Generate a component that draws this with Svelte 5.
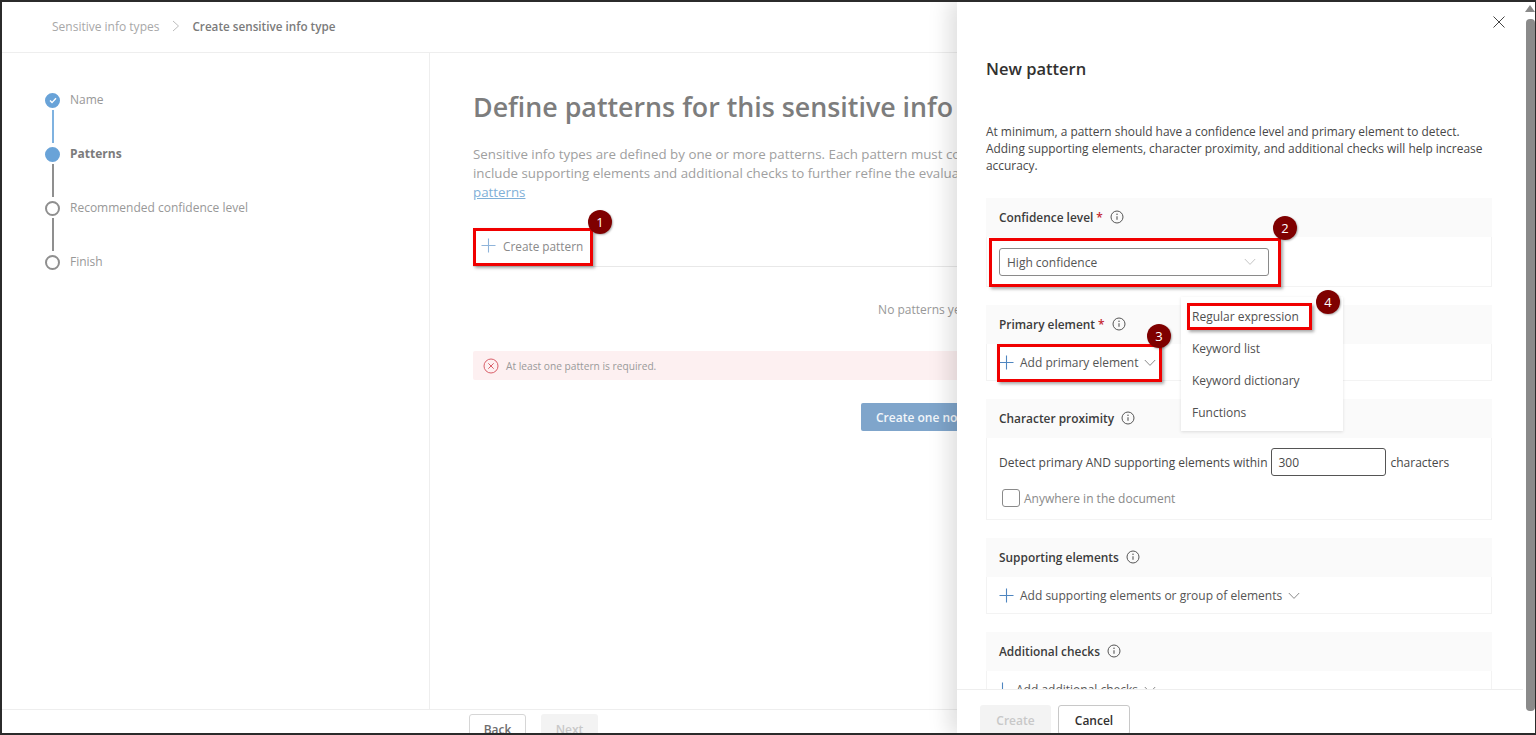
<script>
  const steps = [
    { label: 'Name', state: 'done' },
    { label: 'Patterns', state: 'current' },
    { label: 'Recommended confidence level', state: 'todo' },
    { label: 'Finish', state: 'todo' }
  ];
  const menu = ['Regular expression', 'Keyword list', 'Keyword dictionary', 'Functions'];
</script>

{#snippet plus(color = '#4f86c0')}
  <svg class="plus" width="15" height="15" viewBox="0 0 15 15"><path d="M7.5 .5v14M.5 7.5h14" stroke={color} stroke-width="1.1" fill="none"/></svg>
{/snippet}
{#snippet chev(color = '#8a8a8a')}
  <svg class="chev" width="12" height="8" viewBox="0 0 12 8"><path d="M.8 1l5.2 5.4L11.2 1" stroke={color} stroke-width="1" fill="none"/></svg>
{/snippet}
{#snippet info()}
  <svg class="info" width="14" height="14" viewBox="0 0 14 14"><circle cx="7" cy="7" r="6" stroke="#555" stroke-width="1" fill="none"/><path d="M7 6.2v3.6" stroke="#555" stroke-width="1.1"/><circle cx="7" cy="4.3" r=".75" fill="#555"/></svg>
{/snippet}
{#snippet badge(n, cls)}
  <span class="badge {cls}">{n}</span>
{/snippet}

<div class="frame">
  <header class="crumbs">
    <span class="crumb">Sensitive info types</span>
    <svg width="8" height="12" viewBox="0 0 8 12"><path d="M1 1l5.5 5L1 11" stroke="#bdbdbd" stroke-width="1" fill="none"/></svg>
    <strong>Create sensitive info type</strong>
  </header>

  <div class="wizard">
    <nav class="steps">
      {#each steps as s, i}
        <div class="step {s.state}">
          <div class="rail">
            <span class="dot">
              {#if s.state === 'done'}
                <svg width="8" height="7" viewBox="0 0 8 7"><path d="M1 3.6l2 2 4-4.4" stroke="#fff" stroke-width="1.4" fill="none"/></svg>
              {/if}
            </span>
            {#if i < steps.length - 1}<span class="line"></span>{/if}
          </div>
          <span class="label">{s.label}</span>
        </div>
      {/each}
    </nav>

    <main class="content">
      <h1>Define patterns for this sensitive info type</h1>
      <p class="desc">Sensitive info types are defined by one or more patterns. Each pattern must contain a primary element and can<br/>include supporting elements and additional checks to further refine the evaluation of matched content. Learn about<br/><a href="#top">patterns</a></p>
      <div class="toolbar"><span class="cmd">{@render plus('#8fb4da')} Create pattern</span></div>
      <div class="empty">No patterns yet</div>
      <div class="error">
        <svg width="16" height="16" viewBox="0 0 16 16"><circle cx="8" cy="8" r="7" stroke="#d9606a" fill="none"/><path d="M5.3 5.3l5.4 5.4M10.7 5.3l-5.4 5.4" stroke="#d9606a"/></svg>
        At least one pattern is required.
      </div>
      <div class="cta"><button>Create one now</button></div>
    </main>
  </div>

  <footer class="wizfoot">
    <button class="ghost">Back</button>
    <button class="off">Next</button>
  </footer>

  <aside class="panel">
    <svg class="close" width="12" height="12" viewBox="0 0 12 12"><path d="M.5.5l11 11M11.5.5l-11 11" stroke="#444" stroke-width="1" fill="none"/></svg>
    <div class="scroll">
      <h2>New pattern</h2>
      <p class="intro">At minimum, a pattern should have a confidence level and primary element to detect. Adding supporting elements, character proximity, and additional checks will help increase accuracy.</p>

      <section>
        <h3>Confidence level <em>*</em> {@render info()}</h3>
        <div class="body pad-select">
          <div class="select">High confidence {@render chev('#c4c4c4')}</div>
        </div>
      </section>

      <section>
        <h3>Primary element <em>*</em> {@render info()}</h3>
        <div class="body add">{@render plus()} Add primary element {@render chev()}</div>
      </section>

      <section>
        <h3>Character proximity {@render info()}</h3>
        <div class="body prox">
          <div class="detect">Detect primary AND supporting elements within <span class="num">300</span> characters</div>
          <label class="check"><span class="box"></span> Anywhere in the document</label>
        </div>
      </section>

      <section>
        <h3>Supporting elements {@render info()}</h3>
        <div class="body add">{@render plus()} Add supporting elements or group of elements {@render chev()}</div>
      </section>

      <section>
        <h3>Additional checks {@render info()}</h3>
        <div class="body add nudge">{@render plus()} Add additional checks {@render chev()}</div>
      </section>
    </div>
    <div class="panelfoot">
      <button class="off">Create</button>
      <button class="ghost dark">Cancel</button>
    </div>
    <div class="scrollbar"><span class="arrow"></span><span class="thumb"></span></div>
  </aside>

  <ul class="menu">
    {#each menu as m}<li>{m}</li>{/each}
  </ul>

  <span class="mark m1"></span>
  <span class="mark m2"></span>
  <span class="mark m3"></span>
  <span class="mark m4"></span>
  {@render badge(1, 'b1')}
  {@render badge(2, 'b2')}
  {@render badge(3, 'b3')}
  {@render badge(4, 'b4')}
</div>

<style>
  :global(body) { margin: 0; background: #fff; }
  .frame {
    position: relative; width: 1536px; height: 735px; box-sizing: border-box;
    border: 2px solid #2b2b2b; border-right-width: 1px; overflow: hidden;
    display: flex; flex-direction: column; background: #fff;
    font-family: "Open Sans", "Noto Sans", sans-serif; font-size: 12px; color: #808080;
  }
  .crumbs {
    height: 51px; flex: none; box-sizing: border-box; border-bottom: 1px solid #eee;
    display: flex; align-items: center; gap: 13px; padding-left: 50px; padding-bottom: 2px;
  }
  .crumb { color: #a8a8a8; }
  .crumbs strong { font-weight: 600; color: #7b7b7b; font-size: 11.7px; margin-left: -1px; }
  .wizard { flex: 1; display: flex; min-height: 0; }
  .steps { width: 428px; flex: none; box-sizing: border-box; border-right: 1px solid #eee; padding: 40px 0 0 43px; }
  .step { display: flex; gap: 10px; height: 54px; }
  .rail { width: 15px; display: flex; flex-direction: column; align-items: center; }
  .dot { width: 15px; height: 15px; box-sizing: border-box; border-radius: 50%; display: grid; place-items: center; flex: none; background: #fff; border: 2px solid #8f8f8f; }
  .done .dot, .current .dot { background: #69a3d8; border-color: #69a3d8; }
  .line { width: 2px; height: 33px; margin-top: 2px; background: #8f8f8f; }
  .done .line { background: #7fb2e0; }
  .label { line-height: 15px; margin-top: -1px; color: #989898; }
  .current .label { font-weight: 700; color: #7b7b7b; }
  .content { flex: 1; min-width: 0; padding: 36px 0 0 43px; overflow: hidden; }
  h1 { margin: 0; font-size: 26.8px; line-height: 36px; font-weight: 600; color: #7d7d7d; white-space: nowrap; }
  .desc { margin: 20px 0 0; line-height: 19px; font-size: 13.32px; color: #a0a0a0; white-space: nowrap; }
  .desc a { color: #7fb0d8; }
  .toolbar { margin-top: 23px; height: 41px; width: 700px; border-bottom: 1px solid #e8e8e8; display: flex; align-items: center; padding-left: 8px; box-sizing: content-box; }
  .cmd { display: flex; align-items: center; gap: 7px; color: #8a8a8a; font-size: 11.8px; }
  .empty { width: 897px; text-align: center; margin-top: 33px; line-height: 20px; color: #989898; }
  .error { margin-top: 31px; width: 700px; height: 29px; background: #fdf0f1; border-radius: 2px; display: flex; align-items: center; gap: 7px; padding-left: 10px; box-sizing: border-box; font-size: 10.2px; color: #9a9a9a; }
  .cta { margin-top: 23px; padding-left: 388px; }
  .cta button { height: 28px; width: 130px; border: 0; border-radius: 2px; background: #7fa5cb; color: #f2f6fa; font: 600 12px "Open Sans", sans-serif; text-align: left; padding: 0 0 0 15px; }
  .wizfoot { height: 19px; flex: none; border-top: 1px solid #eee; box-sizing: content-box; display: flex; align-items: flex-start; gap: 15px; padding: 4px 0 0 467px; }
  button { font-family: "Open Sans", sans-serif; font-size: 12px; font-weight: 600; border-radius: 3px; }
  .wizfoot button { width: 57px; height: 30px; flex: none; }
  .ghost { background: #fff; border: 1px solid #d6d6d6; color: #6d6d6d; }
  .off { background: #f3f3f3; border: 0; color: #c8c8c8; }
  .panel {
    position: absolute; top: -2px; bottom: -2px; left: 955px; width: 580px; background: #fff;
    box-shadow: -8px 0 20px rgba(0,0,0,.13); display: flex; flex-direction: column;
  }
  .close { position: absolute; top: 16px; left: 536px; }
  .scroll { flex: 1; min-height: 0; overflow: hidden; padding: 0 45px 0 29px; }
  h2 { margin: 58px 0 0; font-size: 16.5px; line-height: 22px; font-weight: 600; color: #323130; }
  .intro { margin: 43px 0 0; line-height: 17px; font-size: 11.92px; color: #484848; }
  section { margin-top: 18px; }
  .intro + section { margin-top: 24px; }
  h3 { margin: 0; height: 39px; background: #fafafa; display: flex; align-items: center; gap: 3px; font-size: 11.9px; font-weight: 600; color: #3c3c3c; padding: 0 0 2px 13px; box-sizing: border-box; }
  h3 em { color: #c4262e; font-style: normal; }
  h3 .info { margin-left: 4px; }
  .body { box-sizing: border-box; border: 1px solid #f3f3f3; border-top: 0; color: #555; }
  .pad-select { height: 50px; padding: 11px 12px; }
  .select { width: 270px; height: 28px; box-sizing: border-box; border: 1px solid #8a8a8a; border-radius: 3px; display: flex; align-items: center; justify-content: space-between; padding: 0 12px 0 7px; color: #555; }
  .add { height: 37px; display: flex; align-items: center; gap: 6px; padding-left: 12px; padding-top: 1px; }
  .nudge { padding-left: 8px; }
  .prox { height: 82px; padding: 10px 12px 0; }
  .detect { display: flex; align-items: center; gap: 3px; height: 28px; color: #484848; }
  .num { width: 115px; height: 28px; box-sizing: border-box; border: 1px solid #555; border-radius: 3px; display: flex; align-items: center; padding-left: 7px; margin: 0 2px 0 0; }
  .check { display: flex; align-items: center; gap: 4px; margin: 13px 0 0 3px; color: #8a8a8a; }
  .box { width: 18px; height: 18px; box-sizing: border-box; border: 1px solid #8a8a8a; border-radius: 3px; }
  .panelfoot { height: 30px; flex: none; border-top: 1px solid #eee; box-sizing: content-box; display: flex; gap: 7px; padding: 15px 0 0 23px; margin-right: 14px; background: #fff; }
  .panelfoot button { width: 71px; height: 30px; }
  .panelfoot .dark { width: 72px; }
  .dark { color: #323130; border-color: #c8c8c8; }
  .scrollbar { position: absolute; right: 2px; top: 5px; width: 10px; display: flex; flex-direction: column; align-items: center; }
  .arrow { width: 0; height: 0; border: 5px solid transparent; border-top: 0; border-bottom: 7px solid #8a8a8a; }
  .thumb { width: 9px; height: 692px; margin-top: 7px; background: #8a8a8a; border-radius: 4px; }
  .menu { position: absolute; left: 1179px; top: 295px; width: 162px; height: 134px; margin: 0; padding: 4px 0 0; box-sizing: border-box; list-style: none; background: #fff; box-shadow: 0 1px 3px rgba(0,0,0,.12); }
  .menu li { height: 32px; line-height: 32px; padding-left: 11px; color: #505050; }
  .mark { position: absolute; box-sizing: border-box; border: 3px solid #f00000; box-shadow: 2px 2px 3px rgba(0,0,0,.35); }
  .m1 { left: 471px; top: 226px; width: 120px; height: 38px; }
  .m2 { left: 987px; top: 236px; width: 292px; height: 49px; }
  .m3 { left: 995px; top: 342px; width: 165px; height: 38px; }
  .m4 { left: 1185px; top: 301px; width: 125px; height: 27px; }
  .badge { position: absolute; width: 24px; height: 24px; border-radius: 50%; background: #7f0000; color: #fff; font-size: 13px; line-height: 24px; text-align: center; box-shadow: 1px 1px 2px rgba(0,0,0,.3); }
  .b1 { left: 586px; top: 208px; }
  .b2 { left: 1271px; top: 214px; }
  .b3 { left: 1145px; top: 322px; }
  .b4 { left: 1314px; top: 288px; }
</style>
